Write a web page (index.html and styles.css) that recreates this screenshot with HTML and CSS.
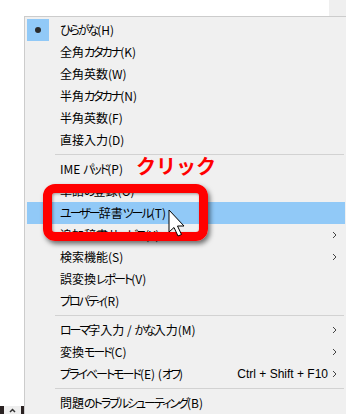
FILE: index.html
```html
<!DOCTYPE html>
<html lang="ja">
<head>
  <meta charset="UTF-8">
  <title>IME メニュー</title>
  <link rel="stylesheet" href="styles.css">
</head>
<body>

<div class="pantalla">
  <div class="barra-superior"><div class="ventana-fondo"></div></div>

  <div class="menu">
    <div class="item"><span class="check activo"><span class="punto"></span></span><span class="texto"><span class="kana">ひらがな</span>(H)</span></div>
    <div class="item"><span class="check"></span><span class="texto">全角<span class="kana">カタカナ</span>(K)</span></div>
    <div class="item"><span class="check"></span><span class="texto">全角英数(W)</span></div>
    <div class="item"><span class="check"></span><span class="texto">半角<span class="kana">カタカナ</span>(N)</span></div>
    <div class="item"><span class="check"></span><span class="texto">半角英数(F)</span></div>
    <div class="item"><span class="check"></span><span class="texto">直接入力(D)</span></div>
    <div class="separador"></div>
    <div class="item"><span class="check"></span><span class="texto">IME <span class="kana">パッド</span>(P)</span></div>
    <div class="item"><span class="check"></span><span class="texto">単語<span class="kana">の</span>登録(O)</span></div>
    <div class="item seleccionado"><span class="check"></span><span class="texto"><span class="kana">ユーザー</span>辞書<span class="kana">ツール</span>(T)</span></div>
    <div class="item"><span class="check"></span><span class="texto">追加辞書<span class="kana">サービス</span>(Y)</span>
      <svg class="flecha" width="5" height="8" viewBox="0 0 5 8"><polyline points="1,1 4,4 1,7" /></svg></div>
    <div class="item"><span class="check"></span><span class="texto">検索機能(S)</span>
      <svg class="flecha" width="5" height="8" viewBox="0 0 5 8"><polyline points="1,1 4,4 1,7" /></svg></div>
    <div class="item"><span class="check"></span><span class="texto">誤変換<span class="kana">レポート</span>(V)</span></div>
    <div class="item"><span class="check"></span><span class="texto"><span class="kana">プロパティ</span>(R)</span></div>
    <div class="separador"></div>
    <div class="item"><span class="check"></span><span class="texto"><span class="kana">ローマ</span>字入力 / <span class="kana">かな</span>入力(M)</span>
      <svg class="flecha" width="5" height="8" viewBox="0 0 5 8"><polyline points="1,1 4,4 1,7" /></svg></div>
    <div class="item"><span class="check"></span><span class="texto">変換<span class="kana">モード</span>(C)</span>
      <svg class="flecha" width="5" height="8" viewBox="0 0 5 8"><polyline points="1,1 4,4 1,7" /></svg></div>
    <div class="item"><span class="check"></span><span class="texto"><span class="kana">プライベートモード</span>(E) (<span class="kana">オフ</span>)</span>
      <span class="atajo">Ctrl + Shift + F10</span>
      <svg class="flecha" width="5" height="8" viewBox="0 0 5 8"><polyline points="1,1 4,4 1,7" /></svg></div>
    <div class="separador"></div>
    <div class="item"><span class="check"></span><span class="texto">問題<span class="kana">のトラブルシューティング</span>(B)</span></div>
  </div>

  <!-- anotaciones encima del menu -->
  <div class="nota">クリック</div>
  <div class="marco-rojo"></div>
  <svg class="cursor" width="19" height="29" viewBox="0 0 19 29">
    <path d="M1,1 L1,23 L6,18.5 L10,27 L13.5,25.5 L9.5,17 L16,17 Z" />
  </svg>

  <div class="barra-tareas">
    <span class="oscuro"></span>
    <span class="boton"><svg width="17" height="8" viewBox="0 0 17 8"><polyline points="6,6 8.5,3.5 11,6" /></svg></span>
    <span class="oscuro angosto"></span>
  </div>
</div>

</body>
</html>
```

FILE: styles.css
```css
body {
  margin: 0;
  background: #fff;
  font-family: "Noto Sans CJK JP", sans-serif;
  font-size: 12px;
  color: #000;
}

.pantalla {
  position: relative;
  width: 346px;
  height: 414px;
  overflow: hidden;
}

.barra-superior {
  height: 16px;
  display: flex;
  justify-content: flex-end;
}

.ventana-fondo {
  width: 17px;
  background-color: #efefef;
}

.menu {
  margin-left: 24px;
  width: 318px;
  height: 397px;
  padding: 2px 1px 0 2px;
  background-color: #f0f0f0;
  border: 1px solid #cccccc;
  border-bottom: none;
}

.item {
  display: flex;
  align-items: center;
  height: 22px;
  line-height: 22px;
  font-feature-settings: "palt";
  white-space: nowrap;
}

.item.seleccionado {
  background-color: #91c9f7;
}

.check {
  width: 22px;
  height: 22px;
  display: flex;
  justify-content: center;
  align-items: center;
}

.check.activo {
  background-color: #91c9f7;
}

.punto {
  width: 6px;
  height: 6px;
  border-radius: 50%;
  background-color: #2b2b2b;
}

.texto {
  margin-left: 11px;
}

/* las kana de Meiryo UI son mas angostas */
.kana {
  letter-spacing: -2px;
}

.atajo {
  margin-left: auto;
  margin-right: 4px;
  font-family: "Liberation Sans", sans-serif;
  font-feature-settings: normal;
}

.flecha {
  margin-left: auto;
  margin-right: 8px;
}

.atajo + .flecha {
  margin-left: 0;
}

.flecha polyline {
  fill: none;
  stroke: #444;
  stroke-width: 1;
}

.separador {
  height: 7px;
  position: relative;
}

.separador::after {
  content: "";
  position: absolute;
  left: 28px;
  right: 1px;
  top: 3px;
  height: 1px;
  background-color: #d2d2d2;
}

.nota {
  position: absolute;
  left: 136px;
  top: 154px;
  font-size: 20px;
  line-height: 24px;
  font-weight: bold;
  color: #ff0000;
}

.marco-rojo {
  position: absolute;
  left: 43px;
  top: 184px;
  width: 165px;
  height: 57px;
  box-sizing: border-box;
  border: 9px solid #ff0000;
  border-radius: 12px;
  box-shadow: 2px 3px 5px rgba(0, 0, 0, 0.55), inset 1px 1px 3px rgba(0, 0, 0, 0.35);
}

.cursor {
  position: absolute;
  left: 168px;
  top: 209px;
}

.cursor path {
  fill: #fff;
  stroke: #000;
  stroke-width: 1;
  stroke-linejoin: miter;
}

.barra-tareas {
  position: absolute;
  left: 0;
  bottom: 0;
  height: 8px;
  display: flex;
}

.oscuro {
  width: 4px;
  background-color: #2a2222;
}

.oscuro.angosto {
  width: 3px;
}

.boton {
  width: 17px;
  height: 8px;
  background-color: #eeeeee;
}

.boton svg {
  display: block;
}

.boton polyline {
  fill: none;
  stroke: #333;
  stroke-width: 1.5;
}
```
